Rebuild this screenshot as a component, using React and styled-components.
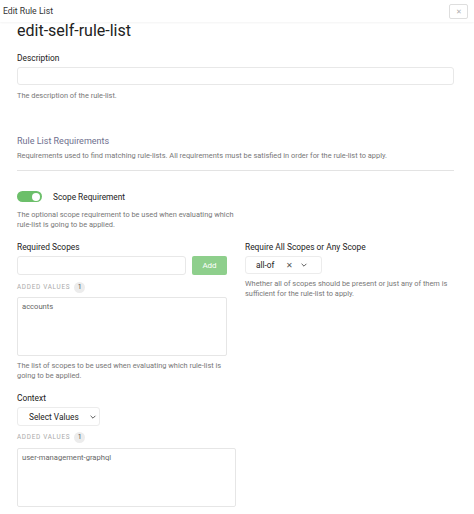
import React from 'react';
import styled, { createGlobalStyle } from 'styled-components';

const GlobalStyle = createGlobalStyle`
  body {
    margin: 0;
    background: #fff;
    font-family: Roboto, "Liberation Sans", sans-serif;
    color: #2a2a2a;
  }
`;

const Header = styled.div`
  height: 22px;
  display: flex;
  align-items: center;
  justify-content: space-between;
  padding: 0 6px 0 3px;
  box-shadow: 0 1px 2px rgba(0, 0, 0, 0.05);
  font-size: 8.7px;
  color: #333;
`;

const CloseButton = styled.button`
  width: 19px;
  height: 15px;
  padding: 0;
  margin-top: 1px;
  border: 1px solid #dedede;
  border-radius: 2px;
  background: #fff;
  color: #b0b0b0;
  font-size: 7px;
  line-height: 1;
  display: flex;
  align-items: center;
  justify-content: center;
`;

const Body = styled.div`
  padding: 0 20px 0 17px;
`;

const Title = styled.h1`
  margin: 0;
  font-size: 16px;
  line-height: 18px;
  font-weight: 400;
  color: #222;
`;

const Label = styled.div`
  margin-top: ${(p) => p.$mt || 11}px;
  font-size: 8.4px;
  line-height: 12px;
  color: #222;
`;

const TextInput = styled.div`
  margin-top: 3px;
  height: 18px;
  box-sizing: border-box;
  border: 1px solid #e8e8e8;
  border-radius: 3px;
  background: #fff;
`;

const Help = styled.div`
  margin-top: ${(p) => p.$mt || 5}px;
  font-size: 7.4px;
  line-height: 10px;
  color: #777;
  max-width: ${(p) => p.$max || 'none'};
`;

const SectionTitle = styled.div`
  margin-top: 34px;
  font-size: 9px;
  line-height: 12px;
  color: #6e6f8e;
`;

const Divider = styled.hr`
  margin: 9px 0 0;
  border: 0;
  border-top: 1px solid #e3e3e3;
`;

const ToggleRow = styled.div`
  margin-top: 20px;
  display: flex;
  align-items: center;
  gap: 11px;
  height: 11px;
  font-size: 8.3px;
  color: #222;
`;

const Toggle = styled.div`
  width: 25px;
  height: 11px;
  border-radius: 6px;
  background: #6cbf6a;
  position: relative;

  &::after {
    content: '';
    position: absolute;
    right: 2px;
    top: 1.5px;
    width: 8px;
    height: 8px;
    border-radius: 50%;
    background: #fff;
  }
`;

const Columns = styled.div`
  display: grid;
  grid-template-columns: 210px 1fr;
  column-gap: 18px;
`;

const InputRow = styled.div`
  margin-top: 3px;
  display: flex;
  gap: 6px;
  height: 19px;
`;

const Field = styled.div`
  flex: 1;
  border: 1px solid #e8e8e8;
  border-radius: 3px;
`;

const AddButton = styled.button`
  width: 35px;
  border: 0;
  border-radius: 2px;
  background: #8ecf8c;
  color: #fff;
  font-family: inherit;
  font-size: 8px;
  padding: 0;
`;

const AddedValues = styled.div`
  margin-top: ${(p) => p.$mt || 7}px;
  display: flex;
  align-items: center;
  gap: 4px;
  height: 10px;
  font-size: 6.4px;
  letter-spacing: 0.7px;
  color: #aaa;
`;

const Count = styled.span`
  width: 11px;
  height: 11px;
  border-radius: 50%;
  background: #ececec;
  color: #555;
  font-size: 7px;
  letter-spacing: 0;
  display: flex;
  align-items: center;
  justify-content: center;
`;

const ValueBox = styled.div`
  margin-top: ${(p) => p.$mt || 5}px;
  width: ${(p) => p.$w || 210}px;
  height: 59px;
  box-sizing: border-box;
  border: 1px solid #e6e6e6;
  border-radius: 2px;
  padding: 4px 4px;
  font-size: 7.6px;
  line-height: 10px;
  color: #666;
`;

const SelectBox = styled.div`
  margin-top: 3px;
  width: 77px;
  height: 18px;
  box-sizing: border-box;
  border: 1px solid #ececec;
  border-radius: 3px;
  display: flex;
  align-items: center;
  padding-left: 10px;
  font-size: 8.3px;
  color: #222;
  white-space: nowrap;
`;

const SelectClear = styled.span`
  margin-left: 12px;
  font-size: 8px;
  color: #555;
`;

const Chevron = styled.svg`
  flex-shrink: 0;
  width: 8px;
  height: 8px;
  margin-left: ${(p) => p.$ml || 8}px;
`;

const SelectButton = styled.div`
  margin-top: 3px;
  width: 83px;
  height: 19px;
  box-sizing: border-box;
  border: 1px solid #ececec;
  border-radius: 3px;
  display: flex;
  align-items: center;
  padding-left: 11px;
  font-size: 8.3px;
  color: #222;
  white-space: nowrap;
`;

const ChevronIcon = ({ ml }) => (
  <Chevron $ml={ml} viewBox="0 0 10 10">
    <path d="M2 3.5 L5 6.5 L8 3.5" fill="none" stroke="#333" strokeWidth="1" />
  </Chevron>
);

const Added = ({ mt }) => (
  <AddedValues $mt={mt}>
    ADDED VALUES <Count>1</Count>
  </AddedValues>
);

export default function App() {
  return (
    <>
      <GlobalStyle />
      <Header>
        <span>Edit Rule List</span>
        <CloseButton>✕</CloseButton>
      </Header>
      <Body>
        <Title>edit-self-rule-list</Title>
        <Label $mt={12}>Description</Label>
        <TextInput />
        <Help $mt={6}>The description of the rule-list.</Help>

        <SectionTitle>Rule List Requirements</SectionTitle>
        <Help $mt={4}>
          Requirements used to find matching rule-lists. All requirements must be satisfied in order for the rule-list to apply.
        </Help>
        <Divider />

        <ToggleRow>
          <Toggle />
          <span>Scope Requirement</span>
        </ToggleRow>
        <Help $mt={8} $max="226px">
          The optional scope requirement to be used when evaluating which rule-list is going to be applied.
        </Help>

        <Columns>
          <div>
            <Label>Required Scopes</Label>
            <InputRow>
              <Field />
              <AddButton>Add</AddButton>
            </InputRow>
            <Added />
            <ValueBox>accounts</ValueBox>
            <Help>The list of scopes to be used when evaluating which rule-list is going to be applied.</Help>
          </div>
          <div>
            <Label>Require All Scopes or Any Scope</Label>
            <SelectBox>
              all-of
              <SelectClear>✕</SelectClear>
              <ChevronIcon ml={7} />
            </SelectBox>
            <Help $mt={5}>
              Whether all of scopes should be present or just any of them is sufficient for the rule-list to apply.
            </Help>
          </div>
        </Columns>

        <Label>Context</Label>
        <SelectButton>
          Select Values
          <ChevronIcon ml={10} />
        </SelectButton>
        <Added mt={6} />
        <ValueBox $mt={6} $w={219}>user-management-graphql</ValueBox>
      </Body>
    </>
  );
}
